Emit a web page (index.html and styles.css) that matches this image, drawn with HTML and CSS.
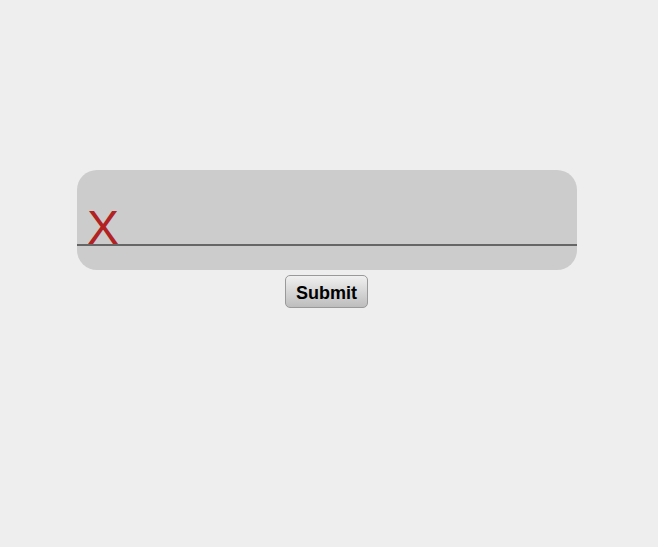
FILE: index.html
```html
<!DOCTYPE html>
<html>
<head>
<meta charset="utf-8">
<link rel="stylesheet" href="styles.css">
</head>
<body>
<div class="page">
  <div class="card">
    <div class="field"><span class="mark">X</span></div>
  </div>
  <div class="actions">
    <button class="submit" type="button">Submit</button>
  </div>
</div>
</body>
</html>
```
FILE: styles.css
```css
html, body {
  margin: 0;
  padding: 0;
  background: #eeeeee;
  font-family: "Liberation Sans", Arial, sans-serif;
}
.page {
  width: 658px;
  height: 547px;
  padding-top: 170px;
  box-sizing: border-box;
}
.card {
  width: 500px;
  height: 100px;
  margin-left: 77px;
  background: #cccccc;
  border-radius: 20px;
  box-sizing: border-box;
  padding-top: 42px;
}
.field {
  height: 32px;
  border-bottom: 2px solid #666666;
  padding-left: 10px;
  display: flex;
  align-items: flex-end;
}
.mark {
  font-size: 48px;
  line-height: 32px;
  color: #b22222;
}
.actions {
  width: 499px;
  margin-left: 77px;
  margin-top: 5px;
  display: flex;
  justify-content: center;
}
.submit {
  font-family: "Liberation Sans", Arial, sans-serif;
  font-weight: bold;
  font-size: 18px;
  line-height: 21px;
  padding: 7px 10px 3px;
  height: 33px;
  width: 83px;
  border: 1px solid #999999;
  border-radius: 5px;
  background: linear-gradient(to bottom, #f0f0f0, #bdbdbd);
  color: #000;
  margin: 0;
}
```
